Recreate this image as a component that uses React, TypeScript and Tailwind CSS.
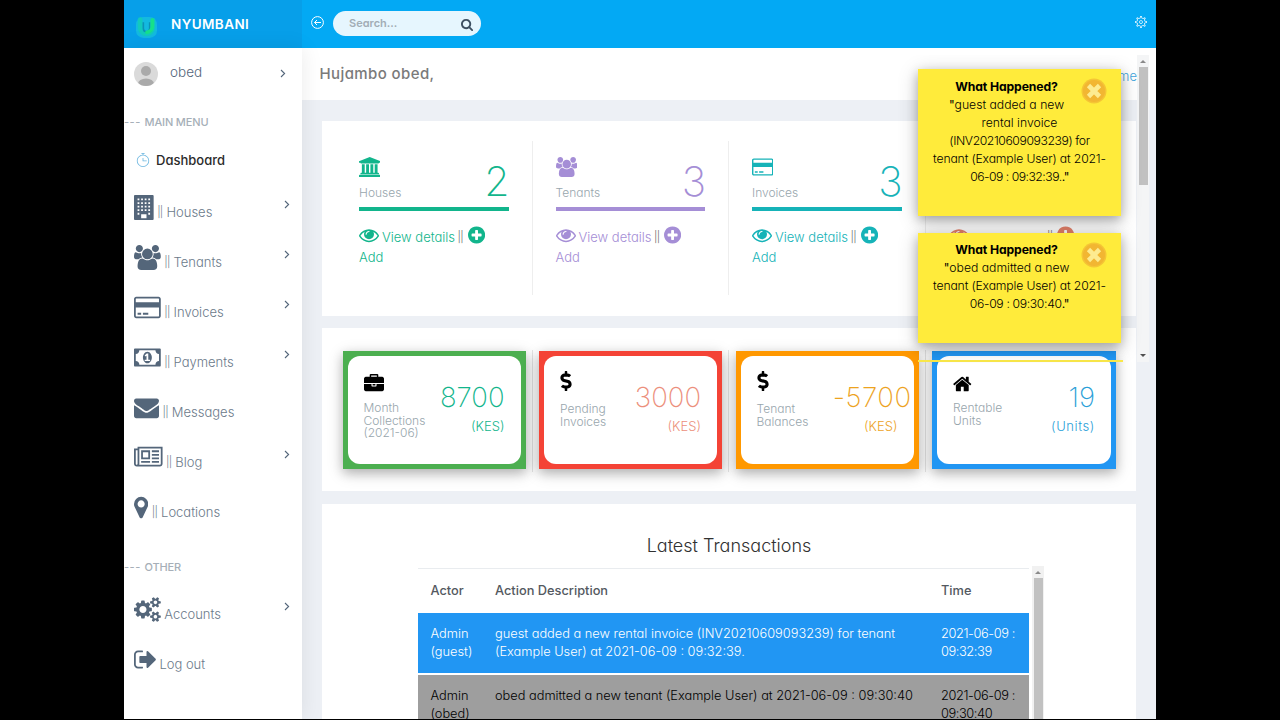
import React from 'react';
import { TfiSettings, TfiTimer } from 'react-icons/tfi';
import { FaDollarSign } from 'react-icons/fa';

interface GlyphProps {
  d: string;
  units: number;
  className?: string;
}

// Icon on a 1792 unit tall em box, width follows the height
const Glyph: React.FC<GlyphProps> = ({ d, units, className = '' }) => (
  <svg viewBox={`0 0 ${units} 1792`} className={`inline-block shrink-0 w-auto ${className}`} fill="currentColor" fillRule="evenodd">
    <path d={d} />
  </svg>
);

const icons = {
  building: {
    units: 1408,
    d: 'M64 0h1280q64 0 64 64v1664q0 64 -64 64h-1280q-64 0 -64 -64v-1664q0 -64 64 -64zM256 256v128h128v-128zM512 256v128h128v-128zM768 256v128h128v-128zM1024 256v128h128v-128zM256 512v128h128v-128zM512 512v128h128v-128zM768 512v128h128v-128zM1024 512v128h128v-128zM256 768v128h128v-128zM512 768v128h128v-128zM768 768v128h128v-128zM1024 768v128h128v-128zM256 1024v128h128v-128zM512 1024v128h128v-128zM768 1024v128h128v-128zM1024 1024v128h128v-128zM256 1280v128h128v-128zM1024 1280v128h128v-128zM512 1376v288h384v-288z',
  },
  users: {
    units: 1920,
    d: 'M593 896q-162 5 -265 128h-134q-82 0 -138 -40.5t-56 -118.5q0 -353 124 -353q6 0 43.5 21t97.5 42.5t119 21.5q67 0 133 -23q-5 37 -5 66q0 139 81 256zM1664 1533q0 120 -73 189.5t-194 69.5h-874q-121 0 -194 -69.5t-73 -189.5q0 -53 3.5 -103.5t14 -109t26.5 -108.5t43 -97.5t62 -81t85.5 -53.5t111.5 -20q10 0 43 21.5t73 48t107 48t135 21.5t135 -21.5t107 -48t73 -48t43 -21.5q61 0 111.5 20t85.5 53.5t62 81t43 97.5t26.5 108.5t14 109t3.5 103.5zM640 256q0 106 -75 181t-181 75t-181 -75t-75 -181t75 -181t181 -75t181 75t75 181zM1344 640q0 159 -112.5 271.5t-271.5 112.5t-271.5 -112.5t-112.5 -271.5t112.5 -271.5t271.5 -112.5t271.5 112.5t112.5 271.5zM1920 865q0 78 -56 118.5t-138 40.5h-134q-103 -123 -265 -128q81 -117 81 -256q0 -29 -5 -66q66 23 133 23q59 0 119 -21.5t97.5 -42.5t43.5 -21q124 0 124 353zM1792 256q0 106 -75 181t-181 75t-181 -75t-75 -181t75 -181t181 -75t181 75t75 181z',
  },
  card: {
    units: 1920,
    d: 'M1760 128q66 0 113 47t47 113v1216q0 66 -47 113t-113 47h-1600q-66 0 -113 -47t-47 -113v-1216q0 -66 47 -113t113 -47h1600zM160 256q-13 0 -22.5 9.5t-9.5 22.5v224h1664v-224q0 -13 -9.5 -22.5t-22.5 -9.5h-1600zM1760 1536q13 0 22.5 -9.5t9.5 -22.5v-608h-1664v608q0 13 9.5 22.5t22.5 9.5h1600zM256 1408v-128h256v128h-256zM640 1408v-128h384v128h-384z',
  },
  money: {
    units: 1920,
    d: 'M768 1152h384v-96h-128v-448h-114l-148 137l77 80q42 -37 55 -57h2v288h-128v96zM1280 896q0 70 -21 142t-59.5 134t-101.5 101t-138 39t-138 -39t-101.5 -101t-59.5 -134t-21 -142t21 -142t59.5 -134t101.5 -101t138 -39t138 39t101.5 101t59.5 134t21 142zM1792 1152v-512q-106 0 -181 -75t-75 -181h-1152q0 106 -75 181t-181 75v512q106 0 181 75t75 181h1152q0 -106 75 -181t181 -75zM1920 320v1152q0 26 -19 45t-45 19h-1792q-26 0 -45 -19t-19 -45v-1152q0 -26 19 -45t45 -19h1792q26 0 45 19t19 45z',
  },
  envelope: {
    units: 1792,
    d: 'M1792 710v794q0 66 -47 113t-113 47h-1472q-66 0 -113 -47t-47 -113v-794q44 49 101 87q362 246 497 345q57 42 92.5 65.5t94.5 48t110 24.5h2q51 0 110 -24.5t94.5 -48t92.5 -65.5q170 -123 498 -345q57 -39 100 -87zM1792 416q0 79 -49 151t-122 123q-376 261 -468 325q-10 7 -42.5 31t-54 38.5t-52 32.5t-57.5 27t-50 9h-2q-23 0 -50 -9t-57.5 -27t-52 -32.5t-54 -38.5t-42.5 -31q-91 -64 -262 -182.5t-205 -142.5q-62 -42 -117 -115.5t-55 -136.5q0 -78 41.5 -130t118.5 -52h1472q65 0 112.5 47t47.5 113z',
  },
  newspaper: {
    units: 2048,
    d: 'M1024 512h-384v384h384v-384zM1152 1152v128h-640v-128h640zM1152 384v640h-640v-640h640zM1792 1152v128h-512v-128h512zM1792 896v128h-512v-128h512zM1792 640v128h-512v-128h512zM1792 384v128h-512v-128h512zM256 1344v-960h-128v960q0 26 19 45t45 19t45 -19t19 -45zM1920 1344v-1088h-1536v1088q0 33 -11 64h1483q26 0 45 -19t19 -45zM2048 128v1216q0 80 -56 136t-136 56h-1664q-80 0 -136 -56t-56 -136v-1088h256v-128h1792z',
  },
  marker: {
    units: 1024,
    d: 'M768 640q0 -106 -75 -181t-181 -75t-181 75t-75 181t75 181t181 75t181 -75t75 -181zM1024 640q0 109 -33 179l-364 774q-16 33 -47.5 52t-67.5 19t-67.5 -19t-46.5 -52l-365 -774q-33 -70 -33 -179q0 -212 150 -362t362 -150t362 150t150 362z',
  },
  cogs: {
    units: 1920,
    d: 'M896 896q0 -106 -75 -181t-181 -75t-181 75t-75 181t75 181t181 75t181 -75t75 -181zM1664 1408q0 -52 -38 -90t-90 -38t-90 38t-38 90q0 53 37.5 90.5t90.5 37.5t90.5 -37.5t37.5 -90.5zM1664 384q0 -52 -38 -90t-90 -38t-90 38t-38 90q0 53 37.5 90.5t90.5 37.5t90.5 -37.5t37.5 -90.5zM1280 805v185q0 10 -7 19.5t-16 10.5l-155 24q-11 35 -32 76q34 48 90 115q7 11 7 20q0 12 -7 19q-23 30 -82.5 89.5t-78.5 59.5q-11 0 -21 -7l-115 -90q-37 19 -77 31q-11 108 -23 155q-7 24 -30 24h-186q-11 0 -20 -7.5t-10 -17.5l-23 -153q-34 -10 -75 -31l-118 89q-7 7 -20 7q-11 0 -21 -8q-144 -133 -144 -160q0 -9 7 -19q10 -14 41 -53t47 -61q-23 -44 -35 -82l-152 -24q-10 -1 -17 -9.5t-7 -19.5v-185q0 -10 7 -19.5t16 -10.5l155 -24q11 -35 32 -76q-34 -48 -90 -115q-7 -11 -7 -20q0 -12 7 -20q22 -30 82 -89t79 -59q11 0 21 7l115 90q34 -18 77 -32q11 -108 23 -154q7 -24 30 -24h186q11 0 20 7.5t10 17.5l23 153q34 10 75 31l118 -89q8 -7 20 -7q11 0 21 8q144 133 144 160q0 8 -7 19q-12 16 -42 54t-45 60q23 48 34 82l152 23q10 2 17 10.5t7 19.5zM1920 1338v140q0 16 -149 31q-12 27 -30 52q51 113 51 138q0 4 -4 7q-122 71 -124 71q-8 0 -46 -47t-52 -68q-20 2 -30 2t-30 -2q-14 21 -52 68t-46 47q-2 0 -124 -71q-4 -3 -4 -7q0 -25 51 -138q-18 -25 -30 -52q-149 -15 -149 -31v-140q0 -16 149 -31q13 -29 30 -52q-51 -113 -51 -138q0 -4 4 -7q4 -2 35 -20t59 -34t30 -16q8 0 46 46.5t52 67.5q20 -2 30 -2t30 2q51 -71 92 -112l6 -2q4 0 124 70q4 3 4 7q0 25 -51 138q17 23 30 52q149 15 149 31zM1920 314v140q0 16 -149 31q-12 27 -30 52q51 113 51 138q0 4 -4 7q-122 71 -124 71q-8 0 -46 -47t-52 -68q-20 2 -30 2t-30 -2q-14 21 -52 68t-46 47q-2 0 -124 -71q-4 -3 -4 -7q0 -25 51 -138q-18 -25 -30 -52q-149 -15 -149 -31v-140q0 -16 149 -31q13 -29 30 -52q-51 -113 -51 -138q0 -4 4 -7q4 -2 35 -20t59 -34t30 -16q8 0 46 46.5t52 67.5q20 -2 30 -2t30 2q51 -71 92 -112l6 -2q4 0 124 70q4 3 4 7q0 25 -51 138q17 23 30 52q149 15 149 31z',
  },
  signOut: {
    units: 1568,
    d: 'M640 1440q0 4 1 20t.5 26.5t-3 23.5t-10 19.5t-20.5 6.5h-320q-119 0 -203.5 -84.5t-84.5 -203.5v-704q0 -119 84.5 -203.5t203.5 -84.5h320q13 0 22.5 9.5t9.5 22.5q0 4 1 20t.5 26.5t-3 23.5t-10 19.5t-20.5 6.5h-320q-66 0 -113 47t-47 113v704q0 66 47 113t113 47h312l11.5 1t11.5 3t8 5.5t7 9t2 13.5zM1568 896q0 26 -19 45l-544 544q-19 19 -45 19t-45 -19t-19 -45v-288h-448q-26 0 -45 -19t-19 -45v-384q0 -26 19 -45t45 -19h448v-288q0 -26 19 -45t45 -19t45 19l544 544q19 19 19 45z',
  },
  bank: {
    units: 1920,
    d: 'M960 0l960 384v128h-128q0 26 -20.5 45t-48.5 19h-1526q-28 0 -48.5 -19t-20.5 -45h-128v-128zM256 640h256v768h128v-768h256v768h128v-768h256v768h128v-768h256v768h59q28 0 48.5 19t20.5 45v64h-1664v-64q0 -26 20.5 -45t48.5 -19h59v-768zM1851 1600q28 0 48.5 19t20.5 45v128h-1920v-128q0 -26 20.5 -45t48.5 -19h1782z',
  },
  eye: {
    units: 1792,
    d: 'M1664 960q-152 -236 -381 -353q61 104 61 225q0 185 -131.5 316.5t-316.5 131.5t-316.5 -131.5t-131.5 -316.5q0 -121 61 -225q-229 117 -381 353q133 205 333.5 326.5t434.5 121.5t434.5 -121.5t333.5 -326.5zM944 576q0 -20 -14 -34t-34 -14q-125 0 -214.5 89.5t-89.5 214.5q0 20 14 34t34 14t34 -14t14 -34q0 -86 61 -147t147 -61q20 0 34 -14t14 -34zM1792 960q0 34 -20 69q-140 230 -376.5 368.5t-499.5 138.5t-499.5 -139t-376.5 -368q-20 -35 -20 -69t20 -69q140 -229 376.5 -368t499.5 -139t499.5 139t376.5 368q20 35 20 69z',
  },
  plusCircle: {
    units: 1536,
    d: 'M1216 960v-128q0 -26 -19 -45t-45 -19h-256v-256q0 -26 -19 -45t-45 -19h-128q-26 0 -45 19t-19 45v256h-256q-26 0 -45 19t-19 45v128q0 26 19 45t45 19h256v256q0 26 19 45t45 19h128q26 0 45 -19t19 -45v-256h256q26 0 45 -19t19 -45zM1536 896q0 209 -103 385.5t-279.5 279.5t-385.5 103t-385.5 -103t-279.5 -279.5t-103 -385.5t103 -385.5t279.5 -279.5t385.5 -103t385.5 103t279.5 279.5t103 385.5z',
  },
  home: {
    units: 1664,
    d: 'M1408 992v480q0 26 -19 45t-45 19h-384v-384h-256v384h-384q-26 0 -45 -19t-19 -45v-480q0 -1 .5 -3t.5 -3l575 -474l575 474q1 2 1 6zM1631 923l-62 74q-8 9 -21 11h-3q-13 0 -21 -7l-692 -577l-692 577q-12 8 -24 7q-13 -2 -21 -11l-62 -74q-8 -10 -7 -23.5t11 -21.5l719 -599q32 -26 76 -26t76 26l244 204v-195q0 -14 9 -23t23 -9h192q14 0 23 9t9 23v408l219 182q10 8 11 21.5t-7 23.5z',
  },
  briefcase: {
    units: 1792,
    d: 'M640 256h512v-128h-512v128zM1792 896v480q0 66 -47 113t-113 47h-1472q-66 0 -113 -47t-47 -113v-480h672v160q0 26 19 45t45 19h320q26 0 45 -19t19 -45v-160h672zM1024 896v128h-256v-128h256zM1792 416v384h-1792v-384q0 -66 47 -113t113 -47h352v-160q0 -40 28 -68t68 -28h576q40 0 68 28t28 68v160h352q66 0 113 47t47 113z',
  },
  search: {
    units: 1664,
    d: 'M1152 832q0 -185 -131.5 -316.5t-316.5 -131.5t-316.5 131.5t-131.5 316.5t131.5 316.5t316.5 131.5t316.5 -131.5t131.5 -316.5zM1664 1664q0 52 -38 90t-90 38q-54 0 -90 -38l-343 -342q-179 124 -399 124q-143 0 -273.5 -55.5t-225 -150t-150 -225t-55.5 -273.5t55.5 -273.5t150 -225t225 -150t273.5 -55.5t273.5 55.5t225 150t150 225t55.5 273.5q0 220 -124 399l343 343q37 37 37 90z',
  },
};

const Angle: React.FC<{ className?: string }> = ({ className = '' }) => (
  <svg viewBox="0 0 6 9" className={`w-[6px] h-[9px] ${className}`} fill="none" stroke="#54667a" strokeWidth="1.1">
    <path d="M1 1l3.6 3.5L1 8" />
  </svg>
);

interface NavItem {
  label: string;
  icon: React.ReactNode;
  arrow?: boolean;
  bars?: boolean;
}

const mainMenu: NavItem[] = [
  { label: 'Houses', icon: <Glyph {...icons.building} className="h-[25px]" />, arrow: true, bars: true },
  { label: 'Tenants', icon: <Glyph {...icons.users} className="h-[25px]" />, arrow: true, bars: true },
  { label: 'Invoices', icon: <Glyph {...icons.card} className="h-[25px]" />, arrow: true, bars: true },
  { label: 'Payments', icon: <Glyph {...icons.money} className="h-[25px]" />, arrow: true, bars: true },
  { label: 'Messages', icon: <Glyph {...icons.envelope} className="h-[25px]" />, bars: true },
  { label: 'Blog', icon: <Glyph {...icons.newspaper} className="h-[25px]" />, arrow: true, bars: true },
  { label: 'Locations', icon: <Glyph {...icons.marker} className="h-[25px]" />, bars: true },
];

const otherMenu: NavItem[] = [
  { label: 'Accounts', icon: <Glyph {...icons.cogs} className="h-[25px]" />, arrow: true },
  { label: 'Log out', icon: <Glyph {...icons.signOut} className="h-[25px]" /> },
];

const NavRow: React.FC<{ item: NavItem }> = ({ item }) => (
  <li className="h-[50px] flex items-center pl-[10px] pr-3 text-[#54667a]">
    <span className="mb-[7px] flex">{item.icon}</span>
    <span className="ml-[3.5px] mt-[3px] flex items-center text-[13px] text-[#6b7a8a]">
      {item.bars && <span className="mr-1 text-[11px] tracking-[-0.8px]">||</span>}
      {item.label}
    </span>
    {item.arrow && <Angle className="ml-auto mb-[13px]" />}
  </li>
);

const MenuHeading: React.FC<{ text: string }> = ({ text }) => (
  <div className="flex text-[11px] leading-[18px] font-medium text-[#a6afb8] whitespace-nowrap">
    <span className="w-[20.5px] tracking-[0.5px]">---</span>
    <span className="tracking-[-0.15px]">{text}</span>
  </div>
);

const Sidebar = () => (
  <aside className="w-[178px] shrink-0 bg-white shadow-[1px_0_20px_rgba(0,0,0,0.08)] z-10">
    <div className="h-[50px] flex items-center pl-[10px] pr-4">
      <svg viewBox="0 0 24 24" className="w-6 h-6 mt-[2px]">
        <clipPath id="face"><circle cx="12" cy="12" r="12" /></clipPath>
        <g clipPath="url(#face)">
          <rect width="24" height="24" fill="#dadada" />
          <circle cx="12" cy="9" r="5" fill="#aaaaaa" />
          <ellipse cx="12" cy="22" rx="8" ry="5.5" fill="#aaaaaa" />
        </g>
      </svg>
      <span className="ml-3 mb-[2px] text-[13.5px] text-[#54667a]">obed</span>
      <Angle className="ml-auto mt-px" />
    </div>
    <div className="h-[46px] pt-[15px]"><MenuHeading text="MAIN MENU" /></div>
    <div className="h-[42px] flex items-center pl-3 pb-2">
      <TfiTimer className="w-[14px] h-[14px] mb-[2px] text-[#6db7e0]" />
      <span className="ml-[6px] text-[13px] font-medium text-[#2b2b2b]">Dashboard</span>
    </div>
    <ul>{mainMenu.map((item) => <NavRow key={item.label} item={item} />)}</ul>
    <div className="h-[52px] pt-[22px]"><MenuHeading text="OTHER" /></div>
    <ul>{otherMenu.map((item) => <NavRow key={item.label} item={item} />)}</ul>
  </aside>
);

const TopBar = () => (
  <header className="h-12 flex bg-[#03a9f4] text-white">
    <div className="w-[178px] flex items-center bg-[#079fe9] pl-3">
      <svg viewBox="0 0 20 20" className="w-[21px] h-[21px] mt-[6px]">
        <rect x="0" y="0" width="20" height="20" rx="7" fill="#13b9e0" />
        <path d="M4 2.5v7.5a6 6 0 0 0 12 0V3" fill="none" stroke="#12c9bd" strokeWidth="4.5" strokeLinecap="round" />
        <path d="M7 5v6a3 3 0 0 0 6 0V5" fill="none" stroke="#0b93b5" strokeWidth="1.5" />
        <path d="M15.5 3v6a5.5 5.5 0 0 1-5 5.5" fill="none" stroke="#16e08a" strokeWidth="3.5" strokeLinecap="round" />
      </svg>
      <span className="ml-[14px] text-[13.5px] font-semibold tracking-[0.4px]">NYUMBANI</span>
    </div>
    <svg viewBox="0 0 13 13" className="ml-[9px] mt-4 w-[13px] h-[13px]" fill="none" stroke="currentColor" strokeWidth="1">
      <circle cx="6.5" cy="6.5" r="5.9" />
      <path d="M10 6.5H3.5M6 4L3.500 6.5L6 9" />
    </svg>
    <div className="ml-[9px] mt-[11px] w-[148px] h-[25px] rounded-full bg-[#e6f6fe] flex items-center pl-4 pr-2 text-[#a2adb5]">
      <span className="text-[11px] font-semibold">Search...</span>
      <Glyph {...icons.search} className="ml-auto mt-[2px] h-[13px] text-[#3d4f61]" />
    </div>
    <TfiSettings className="ml-auto mr-[9px] mt-4 w-[12px] h-[12px]" />
  </header>
);

interface Stat {
  label?: string;
  value?: string;
  icon?: keyof typeof icons;
  text: string;
  bar: string;
}

// The last column sits under the notification list, only its action icons peek out
const stats: Stat[] = [
  { label: 'Houses', value: '2', icon: 'bank', text: 'text-[#12b58c]', bar: 'bg-[#12b58c]' },
  { label: 'Tenants', value: '3', icon: 'users', text: 'text-[#a58ed6]', bar: 'bg-[#a58ed6]' },
  { label: 'Invoices', value: '3', icon: 'card', text: 'text-[#16b3b8]', bar: 'bg-[#16b3b8]' },
  { text: 'text-[#e5826b]', bar: 'bg-[#e5826b]' },
];

const StatColumn: React.FC<{ stat: Stat }> = ({ stat }) => (
  <div className="h-[154px] px-[23px] pt-[16px] border-r border-[#eeeeee] last:border-r-0">
    <div className="flex justify-between h-[50px]">
      <div className="-mt-1">
        {stat.icon && <Glyph {...icons[stat.icon]} className={`block h-5 ${stat.text}`} />}
        <div className="mt-[7px] text-[12px] leading-[18px] text-[#98a6ad]">{stat.label}</div>
      </div>
      <div className={`text-[41px] leading-[49px] font-[250] -mr-px ${stat.text}`}>{stat.value}</div>
    </div>
    <div className={`h-[3.5px] ${stat.bar}`} />
    <div className={`mt-[16.5px] text-[13px] leading-5 ${stat.text}`}>
      <div className="h-5 flex items-center whitespace-nowrap">
        <Glyph {...icons.eye} className="h-5 -mt-1" />
        <span className="ml-[3px] w-[72.5px]">{stat.label ? 'View details' : ''}</span>
        <span className="ml-[3px] mr-[5px] text-[11px] tracking-[-0.8px] text-[#666666]">||</span>
        <Glyph {...icons.plusCircle} className="h-5 -mt-[5px]" />
      </div>
      <div>{stat.label ? 'Add' : ''}</div>
    </div>
  </div>
);

interface Total {
  lines: string[];
  value: string;
  unit: string;
  icon: React.ReactNode;
  frame: string;
  text: string;
  shift?: string;
  spread?: string;
}

const totals: Total[] = [
  {
    lines: ['Month', 'Collections', '(2021-06)'],
    value: '8700',
    unit: '(KES)',
    icon: <Glyph {...icons.briefcase} className="block h-5" />,
    frame: 'bg-[#4caf50]',
    text: 'text-[#12b58c]',
  },
  { lines: ['Pending', 'Invoices'], value: '3000', unit: '(KES)', icon: <FaDollarSign className="w-3 h-5 mt-px" />, frame: 'bg-[#f44336]', text: 'text-[#ec8f7c]' },
  { lines: ['Tenant', 'Balances'], value: '-5700', unit: '(KES)', icon: <FaDollarSign className="w-3 h-5 mt-px" />, frame: 'bg-[#ff9800]', text: 'text-[#eda31f]', shift: '-mr-[14px] tracking-[0.5px]' },
  {
    lines: ['Rentable', 'Units'],
    value: '19',
    unit: '(Units)',
    icon: <Glyph {...icons.home} className="block h-5" />,
    frame: 'bg-[#2196f3]',
    text: 'text-[#2b9fd8]',
    spread: 'tracking-[0.6px]',
  },
];

const TotalColumn: React.FC<{ total: Total }> = ({ total }) => (
  <div className="h-[122px] pl-[6.5px] pr-[6px] pt-px border-r border-[#e6e6e6] last:border-r-0">
    <div className={`h-[118px] p-[5px] shadow-[0_4px_10px_rgba(0,0,0,0.2),0_4px_16px_rgba(0,0,0,0.16)] ${total.frame}`}>
      <div className="h-full rounded-xl bg-white flex justify-between pl-4 pr-4 pt-[14px]">
        <div className="w-[70px] shrink-0">
          <div className="h-5 mb-[12px] text-black">{total.icon}</div>
          {total.lines.map((line) => (
            <div key={line} className="text-[12px] leading-[12.5px] text-[#98a6ad] whitespace-nowrap">{line}</div>
          ))}
        </div>
        <div className={`flex flex-col items-end pt-[7px] ${total.text}`}>
          <div className={`text-[27.5px] leading-10 font-[250] whitespace-nowrap ${total.shift ?? ''}`}>{total.value}</div>
          <div className={`text-[13px] leading-[19px] ${total.spread ?? ''}`}>{total.unit}</div>
        </div>
      </div>
    </div>
  </div>
);

const rows = [
  {
    actor: ['Admin', '(guest)'],
    action: ['guest added a new rental invoice (INV20210609093239) for tenant', '(Example User) at 2021-06-09 : 09:32:39.'],
    time: ['2021-06-09 :', '09:32:39'],
    tone: 'bg-[#2196f3] text-white',
  },
  {
    actor: ['Admin', '(obed)'],
    action: ['obed admitted a new tenant (Example User) at 2021-06-09 : 09:30:40'],
    time: ['2021-06-09 :', '09:30:40'],
    tone: 'bg-[#9e9e9e] text-black',
  },
];

const Lines: React.FC<{ lines: string[]; className?: string }> = ({ lines, className = '' }) => (
  <div className={className}>
    {lines.map((line) => (
      <div key={line} className="whitespace-nowrap">{line}</div>
    ))}
  </div>
);

const Transactions = () => (
  <section className="bg-white h-[216px] pt-[30px] overflow-hidden">
    <h3 className="text-center text-[18px] leading-[23px] text-[#313131]">Latest Transactions</h3>
    <div className="ml-24 mt-[9px] flex w-[626px]">
      <div className="w-[611px] mt-[2px] border-t border-[#e9ecef]">
        <div className="grid grid-cols-[64.5px_446px_1fr] h-11 items-center pl-[12.5px] text-[12.8px] font-medium text-[#54595f]">
          <span>Actor</span>
          <span>Action Description</span>
          <span>Time</span>
        </div>
        {rows.map((row) => (
          <div key={row.time[1]} className={`grid grid-cols-[64.5px_446px_1fr] h-[60px] mb-[1.5px] pl-[12.5px] pt-3 text-[12.8px] leading-[18px] ${row.tone}`}>
            <Lines lines={row.actor} />
            <Lines lines={row.action} />
            <Lines lines={row.time} className="tracking-[-0.4px]" />
          </div>
        ))}
      </div>
      <div className="ml-[3px] w-3 h-[160px] bg-[#f1f1f1] flex flex-col items-center">
        <div className="mt-[5px] border-x-[3px] border-x-transparent border-b-[3px] border-b-[#8a8a8a]" />
        <div className="mt-1 w-[9px] flex-1 bg-[#c1c1c1]" />
      </div>
    </div>
  </section>
);

const CloseBadge = () => (
  <svg viewBox="0 0 26 26" className="absolute right-[14px] top-[9px] w-[26px] h-[26px]">
    <circle cx="13" cy="13" r="12.5" fill="#f5c535" />
    <circle cx="13" cy="13" r="11" fill="#f2b632" />
    <path d="M7.5 7.5l11 11M18.5 7.5l-11 11" stroke="#fdeb90" strokeWidth="4.6" />
  </svg>
);

interface NoteProps {
  className: string;
  children: React.ReactNode;
}

const Note: React.FC<NoteProps> = ({ className, children }) => (
  <div className={`relative w-[203px] bg-[#ffeb3b] text-center text-[12.2px] leading-[18px] text-black whitespace-nowrap shadow-[0_4px_10px_rgba(0,0,0,0.25),0_4px_20px_rgba(0,0,0,0.2)] ${className}`}>
    <CloseBadge />
    <div className="pr-[26px] font-bold tracking-[-0.1px]">What Happened?</div>
    {children}
  </div>
);

// Floating notification list with its own scrollbar
const Notifications = () => (
  <div className="absolute left-[774px] top-[55px] w-[251px] h-[308px] z-20 flex overflow-hidden">
    <div className="w-[239px] pl-5 pt-[14px]">
      <Note className="h-[147px] pt-[9px]">
        <div className="pr-[26px]"><b>"</b>guest added a new</div>
        <div>rental invoice</div>
        <div className="tracking-[-0.4px]">(INV20210609093239) for</div>
        <div className="tracking-[-0.15px]">tenant (Example User) at 2021-</div>
        <div className="tracking-[-0.5px]">06-09 : 09:32:39.<b>."</b></div>
      </Note>
      <Note className="mt-[17px] h-[110px] pt-2">
        <div className="pr-[26px]"><b>"</b>obed admitted a new</div>
        <div className="tracking-[-0.15px]">tenant (Example User) at 2021-</div>
        <div className="tracking-[-0.35px]">06-09 : 09:30:40<b>."</b></div>
      </Note>
      <div className="mt-[16.5px] h-[2.5px] w-[205px] bg-[#fbe94a]" />
    </div>
    <div className="w-3 h-[307px] bg-[#f4f5f6] flex flex-col items-center">
      <div className="mt-[5px] border-x-[3px] border-x-transparent border-b-[3px] border-b-[#8a8a8a]" />
      <div className="mt-1 w-[9px] h-[118px] bg-[#c1c1c1]" />
      <div className="mt-auto mb-[5px] border-x-[3px] border-x-transparent border-t-[3px] border-t-[#505050]" />
    </div>
  </div>
);

const App = () => {
  return (
    <div className="w-[1280px] h-[720px] bg-black flex justify-center overflow-hidden font-['Inter',sans-serif] font-light [font-feature-settings:'cv11']">
      <div className="relative w-[1032px] h-[719px] bg-[#edf0f5] overflow-hidden">
        <TopBar />
        <div className="flex h-[671px]">
          <Sidebar />
          <main className="flex-1 min-w-0">
            <div className="h-[52px] bg-white flex items-center justify-between pl-[17.5px] pr-[19px]">
              <h4 className="mt-px text-[15px] font-medium tracking-[0.4px] text-[#7a7a7a]">Hujambo obed,</h4>
              <span className="mt-[5px] text-[13px] text-[#41a5dd]">Home</span>
            </div>
            <div className="pl-5 pr-5 pt-[21px]">
              <section className="bg-white h-[195px] px-[14px] pt-5 grid grid-cols-4 w-[814px]">
                {stats.map((stat) => <StatColumn key={stat.bar} stat={stat} />)}
              </section>
              <section className="bg-white h-[163px] mt-3 mb-[13px] px-[14px] pt-[22px] grid grid-cols-4 w-[814px]">
                {totals.map((total) => <TotalColumn key={total.lines[0]} total={total} />)}
              </section>
              <Transactions />
            </div>
          </main>
        </div>
        <Notifications />
      </div>
    </div>
  );
};

export default App;
